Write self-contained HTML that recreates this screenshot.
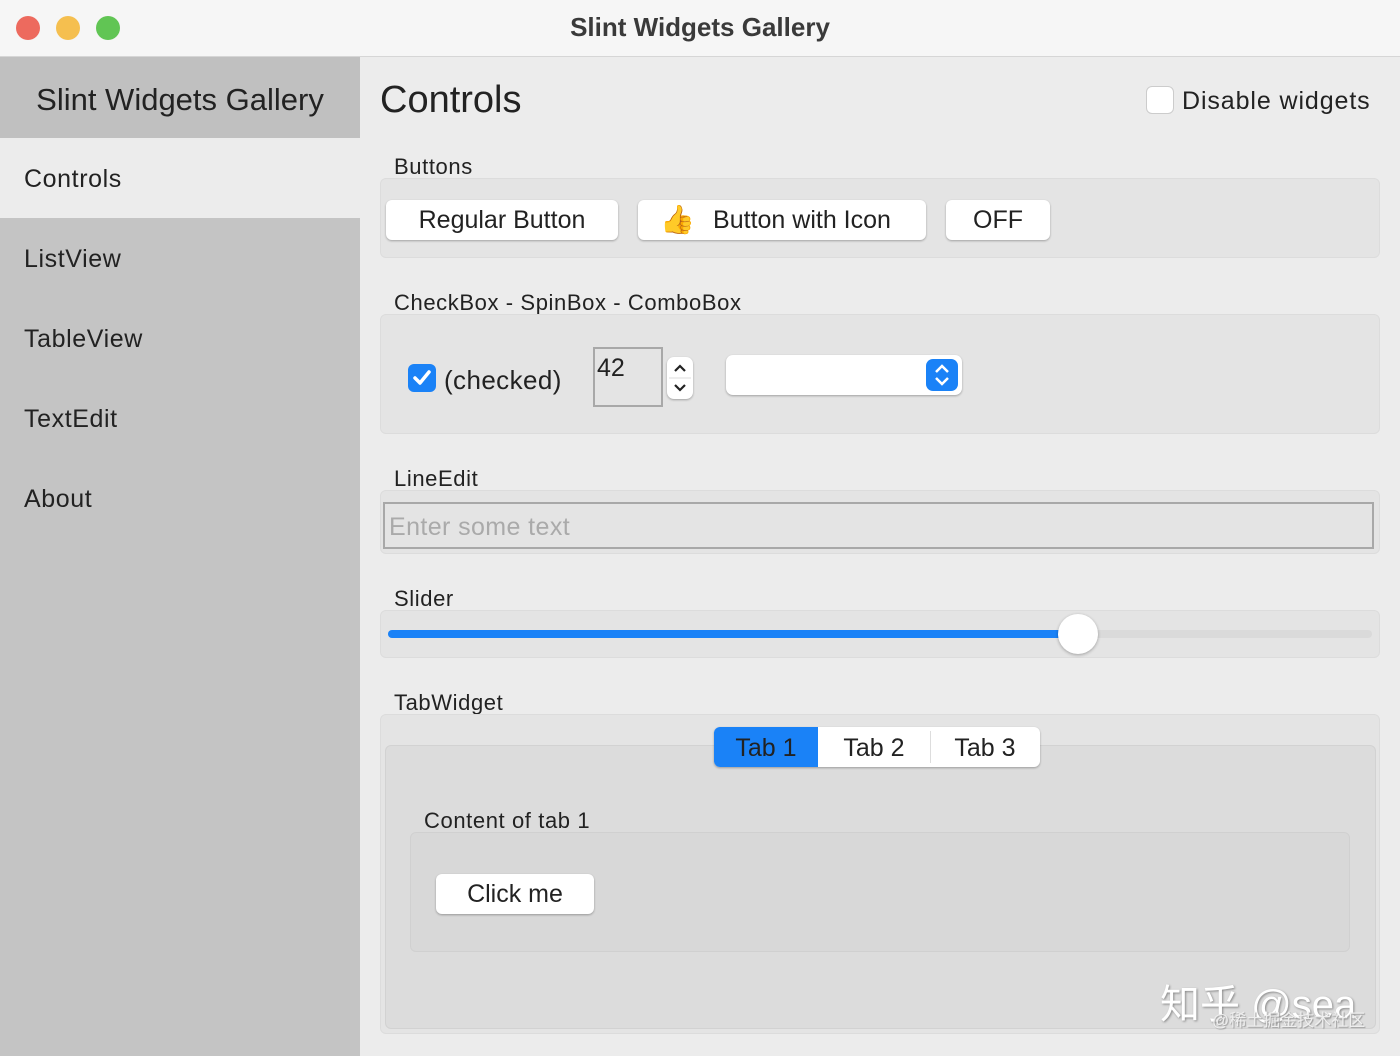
<!DOCTYPE html>
<html><head><meta charset="utf-8"><style>
*{margin:0;padding:0;box-sizing:border-box}
body{width:1400px;height:1056px;overflow:hidden;background:#ececec;font-family:"Liberation Sans","Noto Sans CJK SC",sans-serif;color:#222;position:relative}
.a{position:absolute}
.title{left:0;top:0;width:1400px;height:57px;background:#f6f6f6;border-bottom:1px solid #d6d6d6;text-align:center;font-weight:bold;font-size:26px;line-height:54px;color:#3a3a3a}
.dot{top:16px;width:24px;height:24px;border-radius:50%}
.side{left:0;top:57px;width:360px;height:999px;background:#c4c4c4}
.item{left:0;width:360px;height:80px;font-size:25px;line-height:82px;padding-left:24px;color:#222;letter-spacing:0.6px}
.lbl{font-size:22px;color:#222;letter-spacing:0.6px}
.grp{background:#e4e4e4;border:1px solid #dcdcdc;border-radius:6px}
.btn{background:#fff;border-radius:6px;box-shadow:0 1px 2px rgba(0,0,0,.3);font-size:25px;text-align:center;line-height:40px;height:40px;color:#222}
</style></head><body>
<div class="a title">Slint Widgets Gallery</div>
<div class="a dot" style="left:16px;background:#ed6a5e"></div>
<div class="a dot" style="left:56px;background:#f5bf4f"></div>
<div class="a dot" style="left:96px;background:#61c554"></div>
<div class="a side"></div>
<div class="a" style="left:0;top:57px;width:360px;height:81px;background:#c0c0c0;font-size:31px;line-height:86px;text-align:center;color:#222">Slint Widgets Gallery</div>
<div class="a item" style="top:138px;background:#ececec">Controls</div>
<div class="a item" style="top:218px">ListView</div>
<div class="a item" style="top:298px">TableView</div>
<div class="a item" style="top:378px">TextEdit</div>
<div class="a item" style="top:458px">About</div>

<div class="a" style="left:380px;top:79px;font-size:38px;color:#222">Controls</div>
<div class="a" style="left:1146px;top:86px;width:28px;height:28px;background:#fff;border:1px solid #ccc;border-radius:6px"></div>
<div class="a" style="left:1182px;top:87px;font-size:25px;letter-spacing:0.9px">Disable widgets</div>

<div class="a lbl" style="left:394px;top:154px">Buttons</div>
<div class="a grp" style="left:380px;top:178px;width:1000px;height:80px"></div>
<div class="a btn" style="left:386px;top:200px;width:232px">Regular Button</div>
<div class="a btn" style="left:638px;top:200px;width:288px;padding-left:40px">Button with Icon</div>
<div class="a" style="left:660px;top:200px;font-size:28px;line-height:40px;color:#f3a623">👍</div>
<div class="a btn" style="left:946px;top:200px;width:104px">OFF</div>

<div class="a lbl" style="left:394px;top:290px">CheckBox - SpinBox - ComboBox</div>
<div class="a grp" style="left:380px;top:314px;width:1000px;height:120px"></div>
<div class="a" style="left:408px;top:364px;width:28px;height:28px;background:#1a82f7;border-radius:6px"><svg width="28" height="28"><path d="M7 14l5 5 9-11" stroke="#fff" stroke-width="3.5" fill="none" stroke-linecap="round" stroke-linejoin="round"/></svg></div>
<div class="a" style="left:444px;top:365px;font-size:26px;letter-spacing:0.4px">(checked)</div>
<div class="a" style="left:593px;top:347px;width:70px;height:60px;border:2px solid #a8a8a8;background:#e4e4e4;font-size:25px;padding-left:2px;line-height:38px">42</div>
<div class="a" style="left:667px;top:357px;width:26px;height:42px;background:#fff;border-radius:7px;box-shadow:0 1px 2px rgba(0,0,0,.3)"><svg width="26" height="42"><path d="M8 14l5-5 5 5M8 28l5 5 5-5" stroke="#222" stroke-width="2.2" fill="none"/><path d="M2 21h22" stroke="#ddd"/></svg></div>
<div class="a" style="left:726px;top:355px;width:236px;height:40px;background:#fff;border-radius:7px;box-shadow:0 1px 2px rgba(0,0,0,.3)"></div>
<div class="a" style="left:926px;top:359px;width:32px;height:32px;background:#1a82f7;border-radius:7px"><svg width="32" height="32"><path d="M10 13l6-6 6 6M10 19l6 6 6-6" stroke="#fff" stroke-width="2.5" fill="none"/></svg></div>

<div class="a lbl" style="left:394px;top:466px">LineEdit</div>
<div class="a grp" style="left:380px;top:490px;width:1000px;height:64px"></div>
<div class="a" style="left:383px;top:502px;width:991px;height:47px;border:2px solid #a8a8a8;background:#e4e4e4;font-size:25px;color:#aaa;line-height:47px;padding-left:4px;letter-spacing:0.4px">Enter some text</div>

<div class="a lbl" style="left:394px;top:586px">Slider</div>
<div class="a grp" style="left:380px;top:610px;width:1000px;height:48px"></div>
<div class="a" style="left:388px;top:630px;width:984px;height:8px;background:#dadada;border-radius:4px"></div>
<div class="a" style="left:388px;top:630px;width:690px;height:8px;background:#1a82f7;border-radius:4px"></div>
<div class="a" style="left:1058px;top:614px;width:40px;height:40px;background:#fff;border-radius:50%;box-shadow:0 1px 3px rgba(0,0,0,.3)"></div>

<div class="a lbl" style="left:394px;top:690px">TabWidget</div>
<div class="a grp" style="left:380px;top:714px;width:1000px;height:320px"></div>
<div class="a" style="left:385px;top:745px;width:991px;height:284px;background:#dcdcdc;border:1px solid #d2d2d2;border-radius:6px"></div>
<div class="a" style="left:714px;top:727px;width:326px;height:40px;background:#fff;border-radius:6px;box-shadow:0 1px 2px rgba(0,0,0,.3);font-size:25px;line-height:42px">
<div class="a" style="left:0;top:0;width:104px;height:40px;background:#1a82f7;border-radius:6px 0 0 6px;text-align:center">Tab 1</div>
<div class="a" style="left:104px;top:0;width:112px;text-align:center">Tab 2</div>
<div class="a" style="left:216px;top:4px;width:1px;height:32px;background:#ddd"></div>
<div class="a" style="left:216px;top:0;width:110px;text-align:center">Tab 3</div>
</div>
<div class="a lbl" style="left:424px;top:808px">Content of tab 1</div>
<div class="a" style="left:410px;top:832px;width:940px;height:120px;background:#d8d8d8;border:1px solid #d0d0d0;border-radius:6px"></div>
<div class="a btn" style="left:436px;top:874px;width:158px">Click me</div>
<div class="a" style="left:1160px;top:972px;font-size:40px;color:#fff;text-shadow:1px 1px 2px #888">知乎 @sea</div>
<div class="a" style="left:1212px;top:1006px;font-size:17px;color:#eee;text-shadow:1px 1px 1px #999">@稀土掘金技术社区</div>
</body></html>
